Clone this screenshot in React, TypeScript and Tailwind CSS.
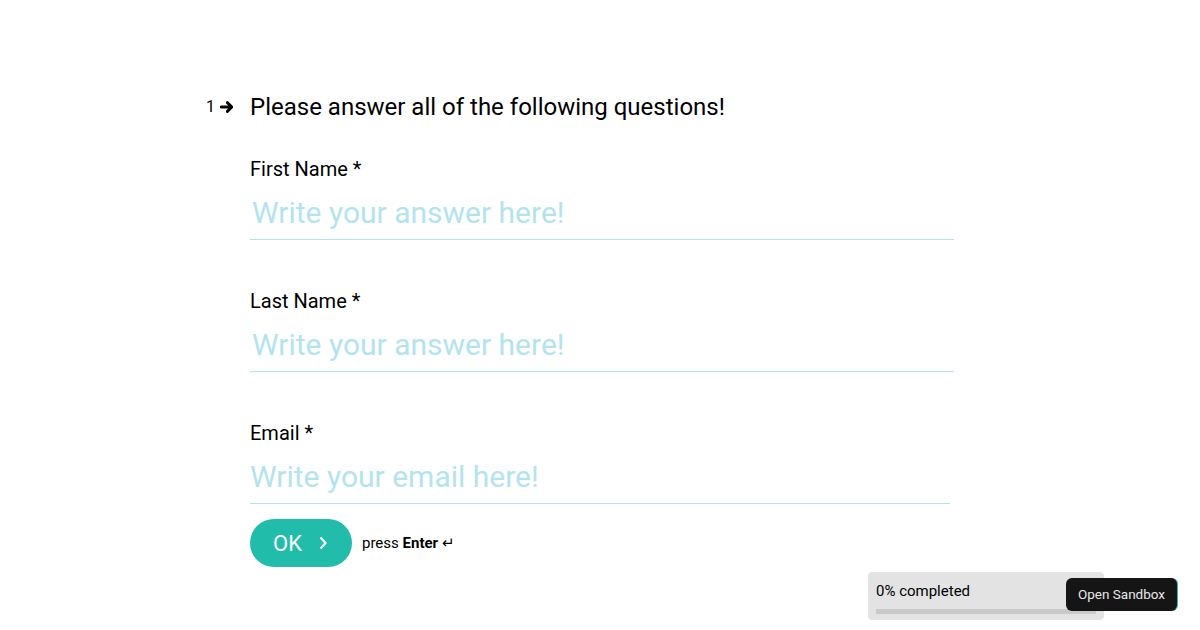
import React from 'react';

const questions = [
  { label: 'First Name *', placeholder: 'Write your answer here!', width: 'w-[704px] pl-[2px]' },
  { label: 'Last Name *', placeholder: 'Write your answer here!', width: 'w-[704px] pl-[2px]' },
  { label: 'Email *', placeholder: 'Write your email here!', width: 'w-[700px]' },
];

const ArrowRight = () => (
  <svg width="13" height="14" viewBox="0 0 448 512" className="fill-black" stroke="black" strokeWidth="40">
    <path d="M438.6 278.6c12.5-12.5 12.5-32.8 0-45.3l-160-160c-12.5-12.5-32.8-12.5-45.3 0s-12.5 32.8 0 45.3L338.8 224H32c-17.7 0-32 14.3-32 32s14.3 32 32 32h306.7L233.4 393.4c-12.5 12.5-12.5 32.8 0 45.3s32.8 12.5 45.3 0l160-160z" />
  </svg>
);

const App: React.FC = () => {
  return (
    <div className="relative w-[1200px] h-[630px] bg-white overflow-hidden font-['Roboto',sans-serif] text-black">
      <div className="flex pt-[91px] pl-[206px]">
        {/* Question number */}
        <div className="w-[44px] h-[32px] flex items-center gap-[5px] text-base">
          <span>1</span>
          <ArrowRight />
        </div>

        <div className="flex flex-col">
          <h1 className="text-2xl leading-8">Please answer all of the following questions!</h1>

          <div className="flex flex-col gap-[47px] mt-[32px]">
            {questions.map((q) => (
              <div key={q.label} className="flex flex-col">
                <label className="text-xl leading-7">{q.label}</label>
                <input
                  type="text"
                  placeholder={q.placeholder}
                  className={`${q.width} h-[50px] mt-[7px] pb-[4px] text-[30px] leading-[44px] border-b border-[#b5e3ec] outline-none bg-transparent placeholder:text-[#b3e4ee]`}
                />
              </div>
            ))}
          </div>

          {/* Submit */}
          <div className="flex items-center mt-[15px]">
            <button className="w-[102px] h-[48px] rounded-full bg-[#21bcaa] text-white flex items-center pl-[23px] gap-[16px]">
              <span className="text-[22px]">OK</span>
              <svg width="10" height="14" viewBox="0 0 10 14" fill="none" stroke="white" strokeWidth="2.2">
                <path d="M2.5 1.5l5 5.5-5 5.5" />
              </svg>
            </button>
            <span className="ml-[10px] text-[15px]">
              press <b className="font-bold">Enter</b> <span className="text-[15px]">↵</span>
            </span>
          </div>
        </div>
      </div>

      {/* Progress */}
      <div className="absolute right-[96px] bottom-[10px] w-[236px] h-[48px] bg-[#e3e3e3] rounded px-[8px] pt-[8px]">
        <div className="text-[15px] leading-[22px]">0% completed</div>
        <div className="mt-[7px] h-[5px] w-[220px] bg-[#c9c9c9]" />
      </div>

      {/* Sandbox button */}
      <div className="absolute left-[1066px] top-[578px] w-[111px] h-[33px] rounded-md bg-[#151515] text-[#e8e8e8] text-[13.5px] flex items-center justify-center shadow-[1px_0_0_#2bb5a7]">
        Open Sandbox
      </div>
    </div>
  );
};

export default App;
